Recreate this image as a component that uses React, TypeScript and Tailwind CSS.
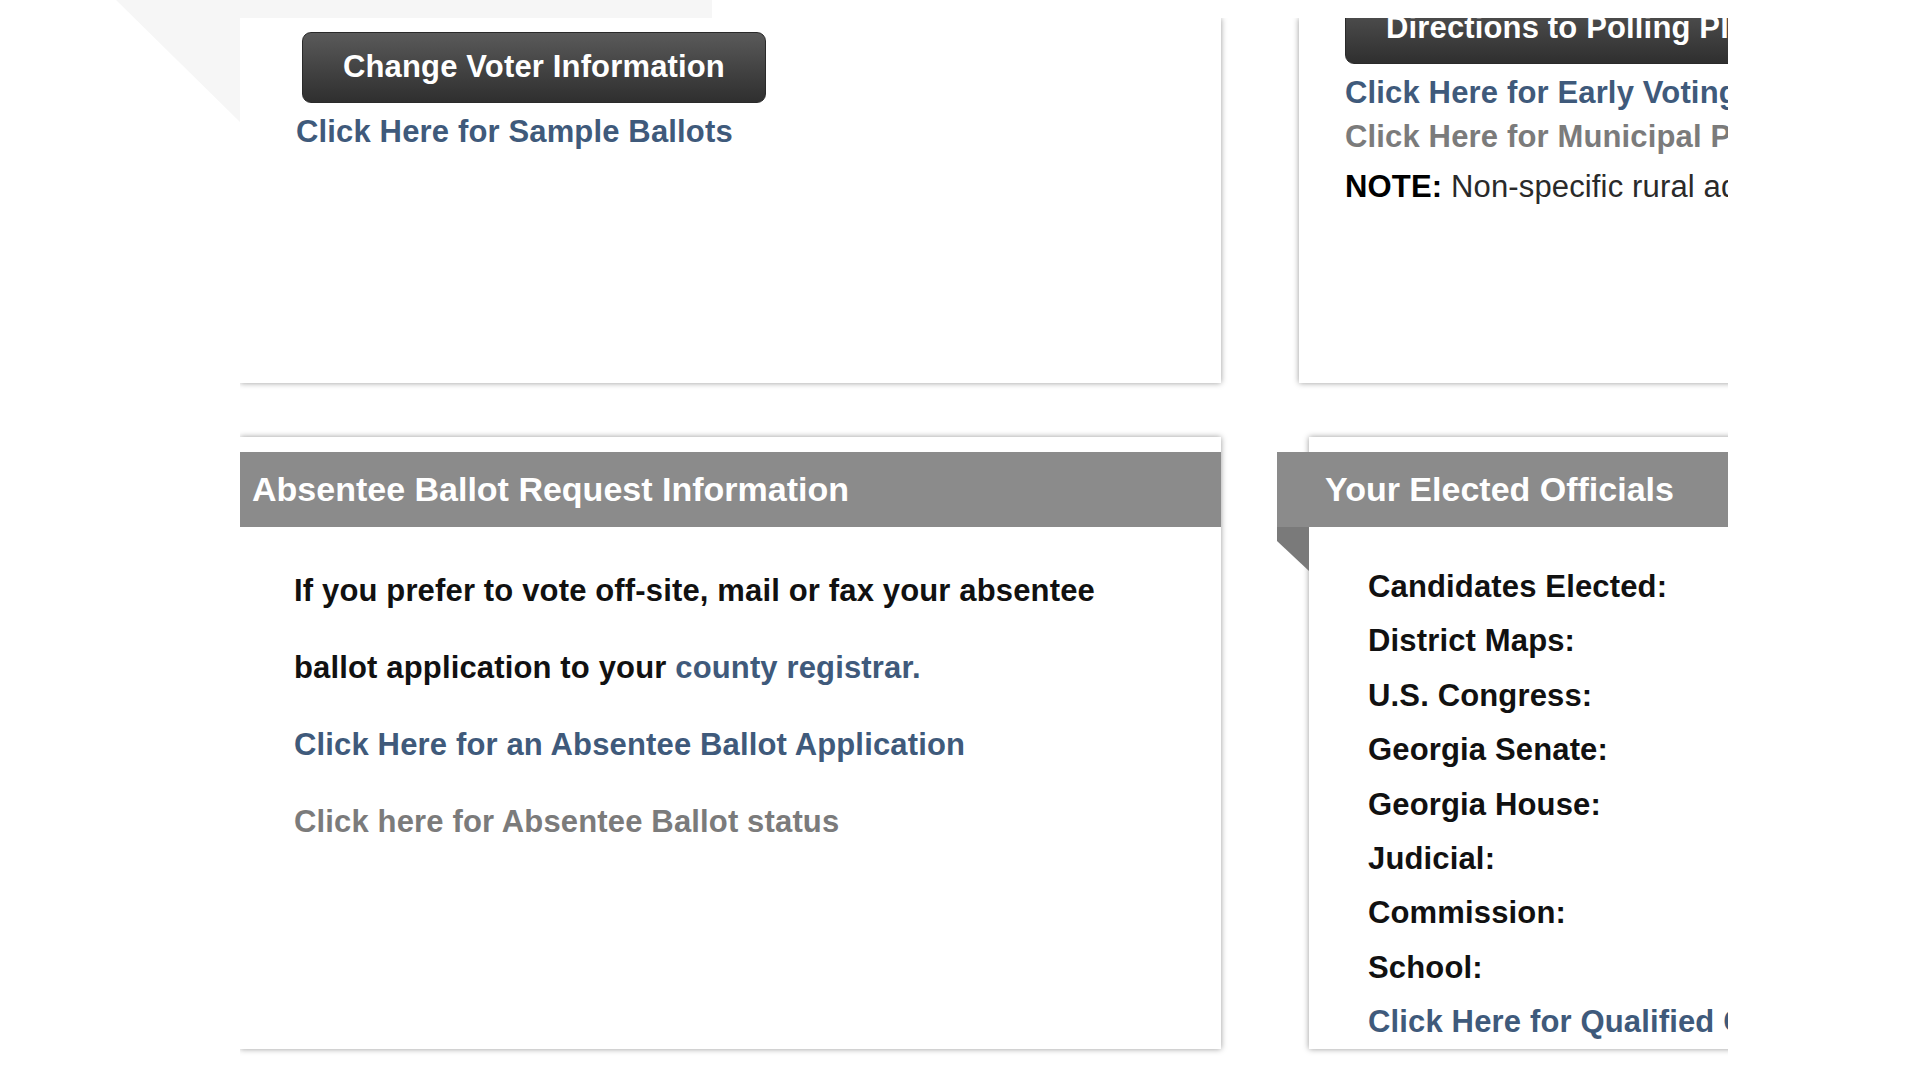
import React from "react";

const linkBlue = "text-[#3f5a7b]";
const linkGray = "text-[#7b7b7b]";

const officials = [
  "Candidates Elected:",
  "District Maps:",
  "U.S. Congress:",
  "Georgia Senate:",
  "Georgia House:",
  "Judicial:",
  "Commission:",
  "School:",
];

const DarkButton = ({ label, className }: { label: string; className?: string }) => (
  <div
    className={`flex h-[71px] w-fit items-center justify-center rounded-[9px] border border-[#2a2a2a] bg-gradient-to-b from-[#5a5a5a] to-[#2f2f2f] px-[40px] text-[31px] font-bold tracking-[0.15px] text-white whitespace-nowrap ${className ?? ""}`}
  >
    {label}
  </div>
);

const SectionBar = ({ title, className }: { title: string; className?: string }) => (
  <div
    className={`flex h-[75px] items-center bg-[#8b8b8b] text-[34px] font-bold text-white whitespace-nowrap ${className ?? ""}`}
  >
    {title}
  </div>
);

export default function App() {
  return (
    <div className="relative h-[1080px] w-[1920px] overflow-hidden bg-white font-['Liberation_Sans',Arial,sans-serif]">
      {/* faint watermark corner */}
      <svg className="absolute left-0 top-0" width="720" height="130" viewBox="0 0 720 130">
        <polygon points="116,0 712,0 712,18 240,18 240,122" fill="#f6f6f6" />
      </svg>

      <div className="relative ml-[240px] mt-[18px] h-[1062px] w-[1488px] overflow-hidden">
        {/* top row */}
        <div className="flex h-[365px]">
          <div className="w-[981px] shrink-0 bg-white shadow-[0_0_6px_rgba(0,0,0,0.4)]">
            <DarkButton label="Change Voter Information" className="ml-[62px] mt-[14px]" />
            <div className={`ml-[56px] mt-[11px] text-[31px] font-bold leading-[36px] tracking-[0.15px] ${linkBlue}`}>
              Click Here for Sample Ballots
            </div>
          </div>

          <div className="ml-[78px] w-[600px] shrink-0 bg-white shadow-[0_0_6px_rgba(0,0,0,0.4)]">
            <DarkButton label="Directions to Polling Place" className="ml-[46px] -mt-[25px]" />
            <div className="ml-[46px] whitespace-nowrap text-[31px] leading-[44px] tracking-[0.15px]">
              <div className={`mt-[7px] font-bold ${linkBlue}`}>Click Here for Early Voting Locations</div>
              <div className={`font-bold ${linkGray}`}>Click Here for Municipal Polling Places</div>
              <div className="mt-[6px] text-[#2a2a2a]">
                <span className="font-bold text-black">NOTE:</span> Non-specific rural addresses may not be accurate.
              </div>
            </div>
          </div>
        </div>

        {/* bottom row */}
        <div className="mt-[54px] flex h-[612px]">
          <div className="w-[981px] shrink-0 bg-white shadow-[0_0_6px_rgba(0,0,0,0.4)]">
            <SectionBar title="Absentee Ballot Request Information" className="mt-[15px] pl-[12px]" />
            <div className="ml-[54px] mt-[25px] text-[31px] font-bold leading-[77px] tracking-[0.15px]">
              <p className="max-w-[860px] text-[#111]">
                If you prefer to vote off-site, mail or fax your absentee ballot application to your{" "}
                <span className={linkBlue}>county registrar.</span>
              </p>
              <div className={linkBlue}>Click Here for an Absentee Ballot Application</div>
              <div className={linkGray}>Click here for Absentee Ballot status</div>
            </div>
          </div>

          <div className="relative ml-[88px] w-[600px] shrink-0 bg-white shadow-[0_0_6px_rgba(0,0,0,0.4)]">
            <SectionBar title="Your Elected Officials" className="-ml-[32px] mt-[15px] pl-[48px]" />
            <svg className="absolute -left-[32px] top-[90px]" width="32" height="44" viewBox="0 0 32 44">
              <polygon points="0,0 32,0 32,44 0,14" fill="#7a7a7a" />
            </svg>
            <div className="ml-[59px] mt-[33px] whitespace-nowrap text-[31px] font-bold leading-[54.4px] tracking-[0.15px]">
              {officials.map((o) => (
                <div key={o} className="text-[#111]">
                  {o}
                </div>
              ))}
              <div className={linkBlue}>Click Here for Qualified Candidates</div>
            </div>
          </div>
        </div>
      </div>
    </div>
  );
}
